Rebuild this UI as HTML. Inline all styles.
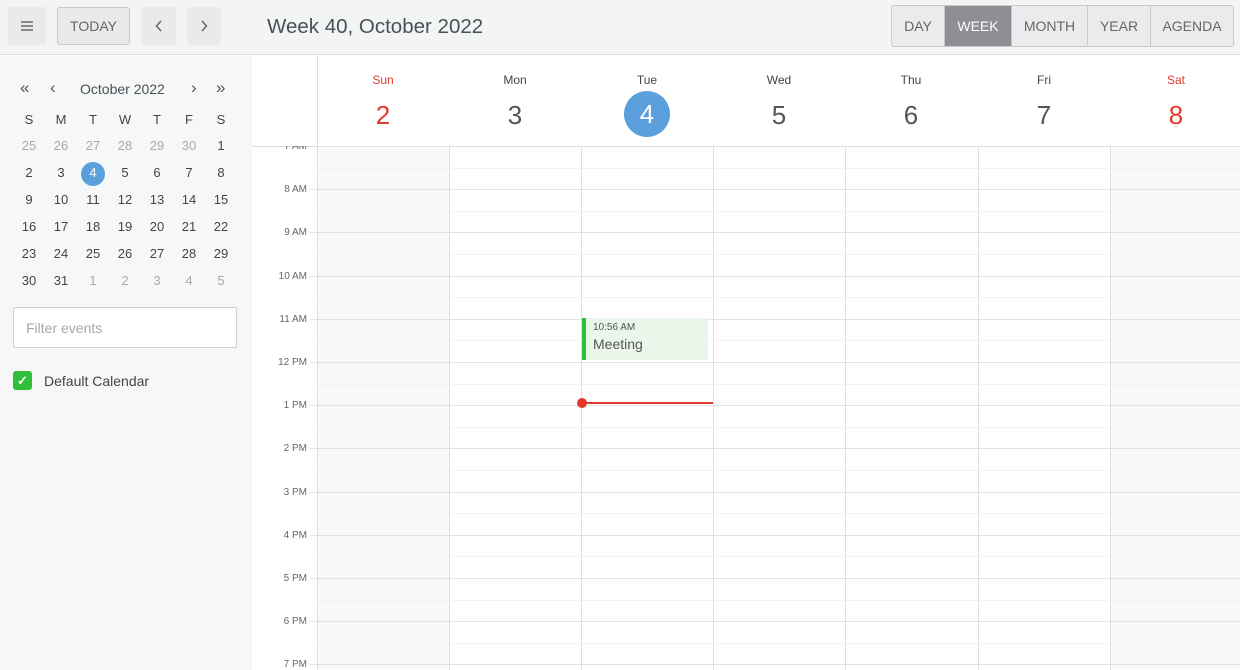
<!DOCTYPE html>
<html style="overflow:hidden"><head><meta charset="utf-8"><style>
*{box-sizing:border-box;margin:0;padding:0}
body{width:1240px;height:670px;overflow:hidden;font-family:"Liberation Sans",sans-serif;background:#fff;position:relative;color:#444}
.top{position:absolute;left:0;top:0;width:1240px;height:55px;background:#f3f4f4;border-bottom:1px solid #dfe0e0}
.btn{position:absolute;top:7px;height:38px;background:#e9eaeb;border-radius:3px;display:flex;align-items:center;justify-content:center;color:#666;font-size:14px}
.seg{position:absolute;top:5px;left:891px;height:42px;display:flex;border:1px solid #c9cacc;border-radius:3px;overflow:hidden}
.seg div{display:flex;align-items:center;justify-content:center;font-size:14px;color:#666;background:#eaebec;border-right:1px solid #c9cacc}
.seg div:last-child{border-right:none}
.side{position:absolute;left:0;top:56px;width:252px;height:614px;background:#f6f7f7}
.mini{position:absolute;font-size:13px;color:#444;text-align:center;width:32px}
.hdr{position:absolute;top:56px;height:90px;text-align:center;width:132px}
.hdr .d{font-size:12px;margin-top:17px}
.hdr .n{font-size:26px;margin-top:13px}
.vl{position:absolute;top:147px;width:1px;height:523px;background:#dedede}
.hl{position:absolute;left:310px;width:930px;height:1px;background:#e3e3e3}
.hh{position:absolute;left:317px;width:923px;height:1px;background:#f3f3f3}
.tl{position:absolute;left:252px;width:55px;text-align:right;font-size:10px;color:#666}
</style></head><body>
<div class="top">
 <div class="btn" style="left:8px;width:38px"><svg width="12" height="10" viewBox="0 0 12 10"><path d="M0 1h12M0 5h12M0 9h12" stroke="#666" stroke-width="1.4"/></svg></div>
 <div class="btn" style="left:57px;width:73px;border:1px solid #c9cacc">TODAY</div>
 <div class="btn" style="left:142px;width:34px"><svg width="8" height="12" viewBox="0 0 8 12"><path d="M6 1L1.5 6 6 11" stroke="#666" stroke-width="1.5" fill="none"/></svg></div>
 <div class="btn" style="left:187px;width:34px"><svg width="8" height="12" viewBox="0 0 8 12"><path d="M2 1l4.5 5L2 11" stroke="#666" stroke-width="1.5" fill="none"/></svg></div>
 <div style="position:absolute;left:267px;top:15px;font-size:20.5px;color:#4a5058">Week 40, October 2022</div>
 <div class="seg">
  <div style="width:53px">DAY</div>
  <div style="width:67px;background:#8e8e94;color:#fff">WEEK</div>
  <div style="width:76px">MONTH</div>
  <div style="width:63px">YEAR</div>
  <div style="width:82px">AGENDA</div>
 </div>
</div>
<div class="side">
 <div style="position:absolute;left:20px;top:22px;font-size:17px;color:#555">«</div>
 <div style="position:absolute;left:50px;top:22px;font-size:17px;color:#555">‹</div>
 <div style="position:absolute;left:80px;top:25px;font-size:14px;color:#4a5058">October 2022</div>
 <div style="position:absolute;left:191px;top:22px;font-size:17px;color:#555">›</div>
 <div style="position:absolute;left:216px;top:22px;font-size:17px;color:#555">»</div>
 <div style="position:absolute;left:13px;top:251px;width:224px;height:41px;background:#fff;border:1px solid #cfd0d1;border-radius:2px;font-size:14px;color:#a8a8a8;padding:12px 12px">Filter events</div>
 <div style="position:absolute;left:13px;top:315px;width:19px;height:19px;background:#2fbf3b;border-radius:3px;color:#fff;font-size:13px;text-align:center;line-height:19px;font-weight:bold">✓</div>
 <div style="position:absolute;left:44px;top:317px;font-size:14px;color:#444">Default Calendar</div>
</div>
<div id="mini"></div>
<div style="position:absolute;left:252px;top:56px;width:988px;height:91px;border-bottom:1px solid #dedede"></div>
<div style="position:absolute;left:317px;top:56px;width:1px;height:90px;background:#dedede"></div>
<div style="position:absolute;left:317px;top:147px;width:132px;height:523px;background:#f8f9f9"></div>
<div style="position:absolute;left:1110px;top:147px;width:130px;height:523px;background:#f8f9f9"></div>
<div id="grid"></div>
<div style="position:absolute;left:252px;top:56px;width:65px;height:90px;background:#fff"></div>
<div style="position:absolute;left:582px;top:318px;width:126px;height:42px;background:#eaf6ea;border-left:4px solid #2fbf3b">
 <div style="font-size:10px;color:#555;margin:4px 0 0 7px">10:56 AM</div>
 <div style="font-size:14px;color:#555;margin:3px 0 0 7px">Meeting</div>
</div>
<div style="position:absolute;left:582px;top:402px;width:131px;height:2px;background:#e2392c"></div>
<div style="position:absolute;left:577px;top:398px;width:10px;height:10px;border-radius:50%;background:#e2392c"></div>
<script>
var m=document.getElementById('mini'),h='';
var xs=[29,61,93,125,157,189,221];
'SMTWTFS'.split('').forEach(function(c,i){h+='<div class="mini" style="left:'+(xs[i]-16)+'px;top:112px">'+c+'</div>'});
var rows=[[25,26,27,28,29,30,1],[2,3,4,5,6,7,8],[9,10,11,12,13,14,15],[16,17,18,19,20,21,22],[23,24,25,26,27,28,29],[30,31,1,2,3,4,5]];
rows.forEach(function(r,ri){r.forEach(function(n,i){var y=137+ri*27;var grey=(ri==0&&i<6)||(ri==5&&i>1);
if(ri==1&&i==2)h+='<div style="position:absolute;left:81px;top:'+(y-2)+'px;width:24px;height:24px;border-radius:50%;background:#5ba0dd"></div>';
h+='<div class="mini" style="left:'+(xs[i]-16)+'px;top:'+(y+1)+'px;color:'+(ri==1&&i==2?'#fff':grey?'#aaa':'#444')+'">'+n+'</div>'})});
m.innerHTML=h;
var g='',days=['Sun','Mon','Tue','Wed','Thu','Fri','Sat'];
for(var i=0;i<7;i++){var x=317+i*132.1;var red=(i==0||i==6);
g+='<div class="vl" style="left:'+Math.round(x)+'px"></div>';
g+='<div class="hdr" style="left:'+Math.round(x)+'px"><div class="d" style="color:'+(red?'#e2392c':'#444')+'">'+days[i]+'</div>';
if(i==2)g+='<div style="width:46px;height:46px;border-radius:50%;background:#5ba0dd;color:#fff;font-size:26px;line-height:46px;margin:4px auto 0">4</div></div>';
else g+='<div class="n" style="color:'+(red?'#e2392c':'#555')+'">'+(i+2)+'</div></div>';}
var lab=['7 AM','8 AM','9 AM','10 AM','11 AM','12 PM','1 PM','2 PM','3 PM','4 PM','5 PM','6 PM','7 PM'];
for(var k=0;k<13;k++){var y=146+k*43.2;
if(k>0)g+='<div class="hl" style="top:'+Math.round(y)+'px"></div>';
if(k<12)g+='<div class="hh" style="top:'+Math.round(y+21.6)+'px"></div>';
g+='<div class="tl" style="top:'+Math.round(y-5)+'px">'+lab[k]+'</div>';}
document.getElementById('grid').innerHTML=g;
</script>
</body></html>
